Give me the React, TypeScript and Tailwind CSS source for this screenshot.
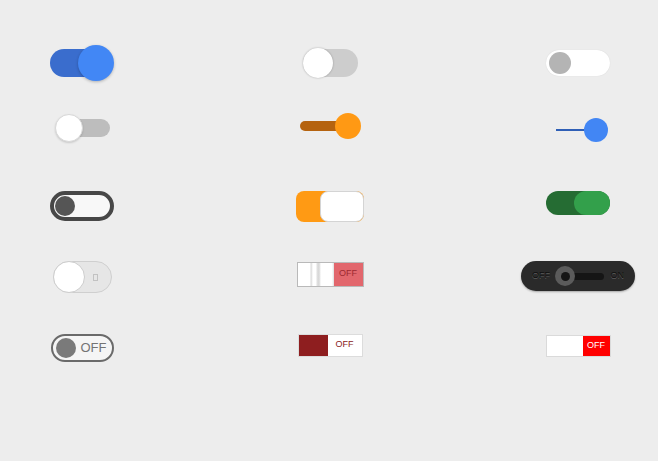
const font = { fontFamily: '"Liberation Sans", Arial, sans-serif' };

function BlueMaterial() {
  return (
    <div className="relative w-[64px] h-[36px]">
      <div className="absolute left-0 top-[4px] w-[56px] h-[28px] rounded-full bg-[#3a6dcd]" />
      <div className="absolute right-0 top-0 w-[36px] h-[36px] rounded-full bg-[#4287f5] shadow-[0_1px_3px_rgba(0,0,0,0.25)]" />
    </div>
  );
}

function GreyIos() {
  return (
    <div className="relative w-[55px] h-[30px]">
      <div className="absolute left-0 top-[1px] w-[55px] h-[28px] rounded-full bg-[#cdcdcd]" />
      <div className="absolute left-0 top-0 w-[30px] h-[30px] rounded-full bg-white shadow-[0_0_2px_rgba(0,0,0,0.3)]" />
    </div>
  );
}

function WhitePill() {
  return (
    <div className="relative w-[64px] h-[26px] rounded-full bg-white shadow-[0_0_1px_rgba(0,0,0,0.15)]">
      <div className="absolute left-[3px] top-[2px] w-[22px] h-[22px] rounded-full bg-[#b4b4b4]" />
    </div>
  );
}

function SmallGrey() {
  return (
    <div className="relative w-[55px] h-[28px] translate-y-[1px]">
      <div className="absolute left-[8px] top-[5px] w-[47px] h-[18px] rounded-full bg-[#bdbdbd]" />
      <div className="absolute left-0 top-0 w-[28px] h-[28px] rounded-full bg-white border border-[#d8d8d8] shadow-[0_1px_2px_rgba(0,0,0,0.15)]" />
    </div>
  );
}

function OrangeSlider() {
  return (
    <div className="relative w-[61px] h-[26px] -translate-y-[1px]">
      <div className="absolute left-0 top-[8px] w-[46px] h-[10px] rounded-full bg-[#b5630f]" />
      <div className="absolute right-0 top-0 w-[26px] h-[26px] rounded-full bg-[#ff9914]" />
    </div>
  );
}

function BlueLine() {
  return (
    <div className="relative w-[52px] h-[24px] translate-y-[3px] translate-x-[4px]">
      <div className="absolute left-0 top-[11px] w-[32px] h-[2px] bg-[#2f5fb6]" />
      <div className="absolute right-0 top-0 w-[24px] h-[24px] rounded-full bg-[#4286f4]" />
    </div>
  );
}

function Outlined() {
  return (
    <div className="flex items-center w-[64px] h-[30px] rounded-full border-[4px] border-[#474747] bg-[#f8f8f8] pl-[1px]">
      <div className="w-[20px] h-[20px] rounded-full bg-[#555555]" />
    </div>
  );
}

function OrangeBlock() {
  return (
    <div className="relative w-[68px] h-[31px] rounded-[8px] bg-[#ff9a14]">
      <div className="absolute right-0 top-0 w-[44px] h-[31px] rounded-[8px] bg-white border border-[#d4d4d4]" />
    </div>
  );
}

function GreenPill() {
  return (
    <div className="relative w-[64px] h-[24px] rounded-full bg-[#256c33] -translate-y-[3px]">
      <div className="absolute right-0 top-0 w-[36px] h-[24px] rounded-full bg-[#33a04b]" />
    </div>
  );
}

function LightIos() {
  return (
    <div className="relative w-[59px] h-[32px] rounded-full bg-[#e6e6e6] border border-[#cfcfcf] translate-y-[1px]">
      <div className="absolute left-[-1px] top-[-1px] w-[32px] h-[32px] rounded-full bg-white border border-[#cdcdcd]" />
      <div className="absolute left-[39px] top-[12px] w-[5px] h-[7px] border border-[#c2c2c2]" />
    </div>
  );
}

function RedStripe() {
  return (
    <div className="flex w-[67px] h-[25px] border border-[#b9b9b9] -translate-y-[2px]">
      <div className="w-[36px] h-full bg-[linear-gradient(90deg,#fff_0px,#fff_12px,#d9d9d9_13px,#fff_15px,#fff_18px,#e0e0e0_19px,#d6d6d6_21px,#fff_23px,#fff_34px,#dcdcdc_36px)]" />
      <div className="flex-1 flex items-center justify-center bg-[#e2676d] text-[9px] text-[#9d2a30]" style={font}>
        OFF
      </div>
    </div>
  );
}

function DarkSlot() {
  return (
    <div
      className="relative flex items-center justify-between w-[114px] h-[30px] rounded-full bg-[#2a2a2a] px-[11px] text-[9px] text-[#101010] shadow-[0_1px_2px_rgba(0,0,0,0.3)] [text-shadow:0_1px_0_rgba(255,255,255,0.22)]"
      style={font}
    >
      <span>OFF</span>
      <span>ON</span>
      <div className="absolute left-[44px] top-[12px] w-[39px] h-[7px] rounded-full bg-[#151515]" />
      <div className="absolute left-[34px] top-[5px] w-[20px] h-[20px] rounded-full bg-[#5b5b5b] flex items-center justify-center">
        <div className="w-[9px] h-[9px] rounded-full bg-[#161616]" />
      </div>
    </div>
  );
}

function OffOutlined() {
  return (
    <div className="flex items-center gap-[5px] w-[63px] h-[28px] rounded-full border-2 border-[#6a6a6a] bg-[#f5f5f5] pl-[3px]">
      <div className="w-[20px] h-[20px] rounded-full bg-[#7a7a7a]" />
      <span className="text-[13px] text-[#747474]" style={font}>
        OFF
      </span>
    </div>
  );
}

function DarkRedBlock() {
  return (
    <div className="flex w-[65px] h-[23px] border border-[#dcdcdc] bg-white -translate-y-[3px]">
      <div className="w-[29px] h-full bg-[#8e1e1f]" />
      <div className="flex-1 flex items-center justify-center text-[9px] text-[#8a1b1b]" style={font}>
        OFF
      </div>
    </div>
  );
}

function RedBlock() {
  return (
    <div className="flex w-[65px] h-[22px] border border-[#dadada] bg-white -translate-y-[2px]">
      <div className="w-[36px] h-full" />
      <div className="flex-1 flex items-center justify-center bg-[#ff0000] text-[9px] text-white" style={font}>
        OFF
      </div>
    </div>
  );
}

export default function App() {
  return (
    <div className="w-[658px] h-[461px] bg-[#ededed] overflow-hidden" style={font}>
      <div className="grid grid-cols-[164px_332px_164px] grid-rows-[70px_58px_100px_40px_104px] pt-[28px] items-center justify-items-center">
        <BlueMaterial />
        <GreyIos />
        <WhitePill />

        <SmallGrey />
        <OrangeSlider />
        <BlueLine />

        <Outlined />
        <OrangeBlock />
        <GreenPill />

        <LightIos />
        <RedStripe />
        <DarkSlot />

        <OffOutlined />
        <DarkRedBlock />
        <RedBlock />
      </div>
    </div>
  );
}
